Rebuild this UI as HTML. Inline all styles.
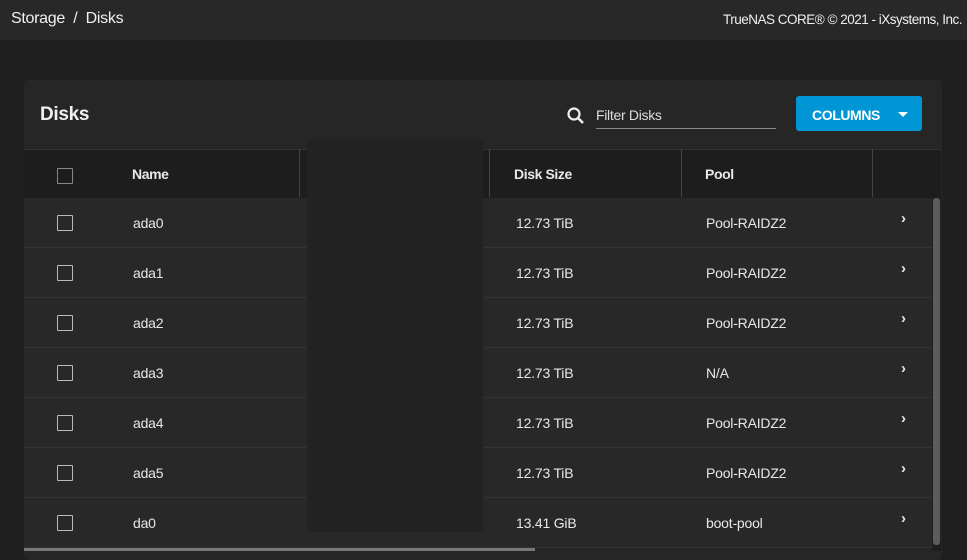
<!DOCTYPE html>
<html><head><style>
body{margin:0;width:967px;height:551px;background:#1e1e1e;font-family:"Liberation Sans",sans-serif;overflow:hidden;position:relative;color:#e8e8e8}
.top{position:absolute;left:0;top:0;width:967px;height:40px;background:#282828}
.abs{position:absolute;white-space:nowrap}
.card{position:absolute;left:24px;top:80px;width:918px;height:480px;background:#262626;border-radius:4px}
.hdr{position:absolute;left:24px;top:149px;width:917px;height:48px;background:#1d1d1d;border-top:1px solid #333;border-bottom:1px solid #333}
.row{position:absolute;left:24px;width:908px;height:49px;background:#282828;border-bottom:1px solid #333}
.cb{position:absolute;left:33px;top:17px;width:14px;height:14px;border:1.5px solid #bbb;border-radius:1px}
.row span{position:absolute;top:17px;font-size:14px;color:#e8e8e8;letter-spacing:-0.2px}
.row span.ch{left:877px;top:12px;font-weight:bold;font-size:15px}
.vl{position:absolute;top:149px;width:1px;height:48px;background:#444}
</style></head><body>
<div class="top"></div>
<div class="abs" style="left:11px;top:10px;font-size:16px;color:#f0f0f0;letter-spacing:-0.3px">Storage&nbsp; /&nbsp; Disks</div>
<div class="abs" style="right:5px;top:12px;font-size:13.5px;color:#f0f0f0;letter-spacing:-0.5px">TrueNAS CORE® © 2021 - iXsystems, Inc.</div>
<div class="card"></div>
<div class="abs" style="left:40px;top:104px;font-size:19px;font-weight:bold;color:#f0f0f0;letter-spacing:-0.3px">Disks</div>
<svg class="abs" style="left:566px;top:106px" width="20" height="20" viewBox="0 0 20 20"><circle cx="8" cy="8" r="5.5" fill="none" stroke="#eee" stroke-width="2.2"/><path d="M12 12 L17 17" stroke="#eee" stroke-width="2.6"/></svg>
<div class="abs" style="left:596px;top:107px;font-size:14px;color:#ddd;letter-spacing:-0.3px">Filter Disks</div>
<div class="abs" style="left:596px;top:128px;width:180px;height:1px;background:#888"></div>
<div class="abs" style="left:796px;top:96px;width:126px;height:35px;background:#0095d5;border-radius:3px"></div>
<div class="abs" style="left:812px;top:107px;font-size:14px;font-weight:bold;color:#fff;letter-spacing:-0.4px">COLUMNS</div>
<div class="abs" style="left:898px;top:112px;width:0;height:0;border-left:5px solid transparent;border-right:5px solid transparent;border-top:5px solid #fff"></div>
<div class="hdr">
<div class="cb" style="top:18px;border-color:#888"></div>
<span class="abs" style="left:108px;top:16px;font-size:14px;font-weight:bold;letter-spacing:-0.4px">Name</span>
<span class="abs" style="left:490px;top:16px;font-size:14px;font-weight:bold;letter-spacing:-0.4px">Disk Size</span>
<span class="abs" style="left:681px;top:16px;font-size:14px;font-weight:bold;letter-spacing:-0.4px">Pool</span>
</div>
<div class="vl" style="left:299px"></div><div class="vl" style="left:489px"></div><div class="vl" style="left:681px"></div><div class="vl" style="left:872px"></div>
<div class="row" style="top:198px"><div class="cb"></div><span style="left:109px">ada0</span><span style="left:492px">12.73 TiB</span><span style="left:682px">Pool-RAIDZ2</span><span class="ch">›</span></div>
<div class="row" style="top:248px"><div class="cb"></div><span style="left:109px">ada1</span><span style="left:492px">12.73 TiB</span><span style="left:682px">Pool-RAIDZ2</span><span class="ch">›</span></div>
<div class="row" style="top:298px"><div class="cb"></div><span style="left:109px">ada2</span><span style="left:492px">12.73 TiB</span><span style="left:682px">Pool-RAIDZ2</span><span class="ch">›</span></div>
<div class="row" style="top:348px"><div class="cb"></div><span style="left:109px">ada3</span><span style="left:492px">12.73 TiB</span><span style="left:682px">N/A</span><span class="ch">›</span></div>
<div class="row" style="top:398px"><div class="cb"></div><span style="left:109px">ada4</span><span style="left:492px">12.73 TiB</span><span style="left:682px">Pool-RAIDZ2</span><span class="ch">›</span></div>
<div class="row" style="top:448px"><div class="cb"></div><span style="left:109px">ada5</span><span style="left:492px">12.73 TiB</span><span style="left:682px">Pool-RAIDZ2</span><span class="ch">›</span></div>
<div class="row" style="top:498px"><div class="cb"></div><span style="left:109px">da0</span><span style="left:492px">13.41 GiB</span><span style="left:682px">boot-pool</span><span class="ch">›</span></div>
<div class="abs" style="left:307px;top:140px;width:176px;height:392px;background:#222"></div>
<div class="abs" style="left:932px;top:198px;width:9px;height:353px;background:#1e1e1e"></div>
<div class="abs" style="left:933px;top:198px;width:7px;height:347px;background:#5c5c5c;border-radius:3px"></div>
<div class="abs" style="left:24px;top:548px;width:511px;height:3px;background:#777"></div>
</body></html>
